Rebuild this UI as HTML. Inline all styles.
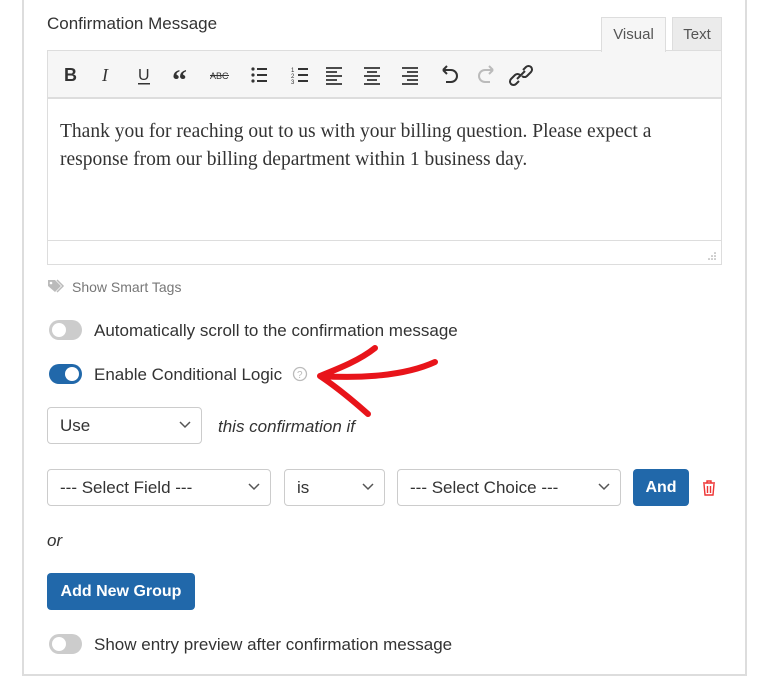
<!DOCTYPE html>
<html><head><meta charset="utf-8"><style>
*{box-sizing:border-box;margin:0;padding:0}
body{width:768px;height:685px;background:#fff;font-family:"Liberation Sans",sans-serif;color:#333;position:relative;overflow:hidden}
.a{position:absolute}
.outer{left:22px;top:-2px;width:725px;height:678px;border:2px solid #ddd;border-top:none}
.tab{top:17px;height:34px;border:1px solid #ddd;border-bottom:none;font-size:15px;color:#555;text-align:center;line-height:33px}
.tb{left:47px;top:50px;width:675px;height:49px;background:#f6f6f6;border:1px solid #ddd;border-bottom:2px solid #ddd}
.ed{left:47px;top:98px;width:675px;height:167px;border:1px solid #ddd;border-top:none}
.sel{height:37px;border:1px solid #ccc;border-radius:4px;font-size:17px;line-height:35px;padding-left:12px;color:#333}
.sel svg{position:absolute;right:10px;top:13px}
.btn{background:#2168aa;color:#fff;border-radius:4px;font-size:16px;font-weight:bold;text-align:center}
.tg{width:33px;height:20px;border-radius:10px;background:#ccc}
.tg::after{content:"";position:absolute;top:3px;left:3px;width:14px;height:14px;border-radius:50%;background:#fff}
.tg.on{background:#2168aa}.tg.on::after{left:16px}
.lbl{font-size:17px;color:#333}
</style></head><body>
<div class="a outer"></div>
<div class="a" style="left:47px;top:14px;font-size:17px">Confirmation Message</div>
<div class="a tab" style="left:601px;width:65px;background:#f6f6f6;height:35px;z-index:2">Visual</div>
<div class="a tab" style="left:672px;width:50px;background:#ebebeb">Text</div>
<div class="a tb"></div>
<svg class="a" style="left:47px;top:50px" width="500" height="48" font-family="Liberation Sans" fill="#333">
<text x="17" y="31" font-size="18" font-weight="bold">B</text>
<text x="55" y="31" font-size="18" font-style="italic" font-family="Liberation Serif">I</text>
<text x="91" y="30" font-size="16">U</text><rect x="91" y="33" width="12" height="1.5"/>
<text x="125" y="40" font-size="30" font-weight="bold" font-family="Liberation Serif">“</text>
<text x="163" y="29" font-size="9">ABC</text><rect x="163" y="25" width="19" height="1"/>
<g stroke="#333" stroke-width="2"><path d="M210 19h10M210 25h10M210 31h10"/>
<path d="M251 19h10M251 25h10M251 31h10"/>
<path d="M279 18h16M279 22h11M279 26h16M279 30h11M279 34h16" stroke-width="1.8"/>
<path d="M317 18h16M320 22h10M317 26h16M320 30h10M317 34h16" stroke-width="1.8"/>
<path d="M355 18h16M360 22h11M355 26h16M360 30h11M355 34h16" stroke-width="1.8"/></g>
<circle cx="206" cy="19" r="1.6"/><circle cx="206" cy="25" r="1.6"/><circle cx="206" cy="31" r="1.6"/>
<text x="244" y="22" font-size="6">1</text><text x="244" y="28" font-size="6">2</text><text x="244" y="34" font-size="6">3</text>
<path d="M396 20h8a6 6 0 0 1 0 12h-5M396 20l4-4M396 20l4 4" stroke="#333" stroke-width="2" fill="none"/>
<path d="M446 20h-8a6 6 0 0 0 0 12h5M446 20l-4-4M446 20l-4 4" stroke="#bbb" stroke-width="2" fill="none"/>
<path d="M472 31l-3 3a3.5 3.5 0 0 1-5-5l4-4a3.5 3.5 0 0 1 5 0M476 20l3-3a3.5 3.5 0 0 1 5 5l-4 4a3.5 3.5 0 0 1-5 0M470 29l8-8" stroke="#333" stroke-width="2" fill="none"/>
</svg>
<div class="a ed"></div>
<div class="a" style="left:47px;top:240px;width:675px;border-top:1px solid #ddd"></div>
<div class="a" style="left:60px;top:118px;width:650px;font-family:'Liberation Serif',serif;font-size:19.5px;line-height:28px;color:#333">Thank you for reaching out to us with your billing question. Please expect a response from our billing department within 1 business day.</div>
<svg class="a" style="left:707px;top:251px" width="10" height="10" fill="#999"><circle cx="8" cy="2" r=".8"/><circle cx="8" cy="5" r=".8"/><circle cx="8" cy="8" r=".8"/><circle cx="5" cy="5" r=".8"/><circle cx="5" cy="8" r=".8"/><circle cx="2" cy="8" r=".8"/></svg>
<svg class="a" style="left:47px;top:279px" width="18" height="14"><path d="M1 1h7l6 6-6 6-7-6z" fill="#bbb"/><path d="M10 1l6 6-6 6" stroke="#bbb" stroke-width="1.5" fill="none"/><circle cx="4" cy="4" r="1.3" fill="#fff"/></svg>
<div class="a" style="left:72px;top:279px;font-size:14px;color:#777">Show Smart Tags</div>
<div class="a tg" style="left:49px;top:320px"></div>
<div class="a lbl" style="left:94px;top:321px">Automatically scroll to the confirmation message</div>
<div class="a tg on" style="left:49px;top:364px"></div>
<div class="a lbl" style="left:94px;top:365px">Enable Conditional Logic</div>
<svg class="a" style="left:292px;top:366px" width="16" height="16"><circle cx="8" cy="8" r="6.5" stroke="#bbb" stroke-width="1.3" fill="none"/><text x="5" y="12" font-size="10" fill="#bbb" font-family="Liberation Sans">?</text></svg>
<svg class="a" style="left:310px;top:340px" width="140" height="80"><path d="M65 8C50 20 30 28 10 36 M10 36C40 38 90 38 125 22 M10 36C25 46 40 58 58 74" stroke="#e8141a" stroke-width="6" fill="none" stroke-linecap="round"/></svg>
<div class="a sel" style="left:47px;top:407px;width:155px">Use<svg width="12" height="8"><path d="M1 1l5 5 5-5" stroke="#555" stroke-width="1.5" fill="none"/></svg></div>
<div class="a" style="left:218px;top:417px;font-size:17px;font-style:italic;color:#333">this confirmation if</div>
<div class="a sel" style="left:47px;top:469px;width:224px">--- Select Field ---<svg width="12" height="8"><path d="M1 1l5 5 5-5" stroke="#555" stroke-width="1.5" fill="none"/></svg></div>
<div class="a sel" style="left:284px;top:469px;width:101px">is<svg width="12" height="8"><path d="M1 1l5 5 5-5" stroke="#555" stroke-width="1.5" fill="none"/></svg></div>
<div class="a sel" style="left:397px;top:469px;width:224px">--- Select Choice ---<svg width="12" height="8"><path d="M1 1l5 5 5-5" stroke="#555" stroke-width="1.5" fill="none"/></svg></div>
<div class="a btn" style="left:633px;top:469px;width:56px;height:37px;line-height:37px">And</div>
<svg class="a" style="left:701px;top:479px" width="16" height="18"><path d="M2 4h12M6 4V2h4v2M3 5l1 11h8l1-11M6.5 7v7M9.5 7v7" stroke="#e33" stroke-width="1.4" fill="none"/></svg>
<div class="a" style="left:47px;top:531px;font-size:17px;font-style:italic">or</div>
<div class="a btn" style="left:47px;top:573px;width:148px;height:37px;line-height:37px">Add New Group</div>
<div class="a tg" style="left:49px;top:634px"></div>
<div class="a lbl" style="left:94px;top:635px">Show entry preview after confirmation message</div>
</body></html>
